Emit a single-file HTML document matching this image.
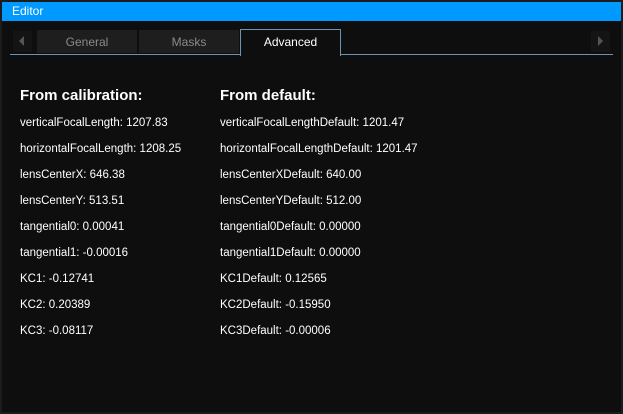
<!DOCTYPE html>
<html><head><style>
body{margin:0;width:623px;height:414px;background:#1c1c1c;font-family:"Liberation Sans",sans-serif;overflow:hidden}
.win{position:absolute;left:2px;top:2px;width:619px;height:410px;background:#0e0e0e}
.title{position:absolute;left:0;top:0;width:619px;height:19px;background:#0099ff;color:#fff;font-size:12px;line-height:19px;padding-left:10px;box-sizing:border-box}
.line{position:absolute;left:8px;top:52px;width:603px;height:1px;background:#6a94b4}
.tab{position:absolute;top:28px;height:23px;background:#1e1e1e;color:#8a8a8a;font-size:12px;line-height:25px;text-align:center}
.act{background:#0e0e0e;color:#fff;border:1px solid #6a94b4;border-bottom:none;top:27px;height:26px}
.arr{position:absolute;top:29px;width:19px;height:21px;background:#141414}
.t{position:absolute;color:#fff;font-size:11.5px;white-space:nowrap}
.h{position:absolute;color:#fff;font-size:15px;font-weight:bold}
</style></head><body><div class="win">
<div class="title">Editor</div>
<div class="arr" style="left:11px"><div style="position:absolute;left:6px;top:5px;border-right:5px solid #555;border-top:5px solid transparent;border-bottom:5px solid transparent"></div></div>
<div class="tab" style="left:35px;width:100px">General</div>
<div class="tab" style="left:137px;width:100px">Masks</div>
<div class="line"></div>
<div class="tab act" style="left:238px;width:99px">Advanced</div>
<div class="arr" style="left:589px"><div style="position:absolute;left:7px;top:5px;border-left:5px solid #555;border-top:5px solid transparent;border-bottom:5px solid transparent"></div></div>
<div class="h" style="left:18px;top:85px">From calibration:</div>
<div class="h" style="left:218px;top:85px">From default:</div>
<div class="t" style="left:18px;top:115px">verticalFocalLength: 1207.83</div>
<div class="t" style="left:18px;top:141px">horizontalFocalLength: 1208.25</div>
<div class="t" style="left:18px;top:167px">lensCenterX: 646.38</div>
<div class="t" style="left:18px;top:193px">lensCenterY: 513.51</div>
<div class="t" style="left:18px;top:219px">tangential0: 0.00041</div>
<div class="t" style="left:18px;top:245px">tangential1: -0.00016</div>
<div class="t" style="left:18px;top:271px">KC1: -0.12741</div>
<div class="t" style="left:18px;top:297px">KC2: 0.20389</div>
<div class="t" style="left:18px;top:323px">KC3: -0.08117</div>
<div class="t" style="left:218px;top:115px">verticalFocalLengthDefault: 1201.47</div>
<div class="t" style="left:218px;top:141px">horizontalFocalLengthDefault: 1201.47</div>
<div class="t" style="left:218px;top:167px">lensCenterXDefault: 640.00</div>
<div class="t" style="left:218px;top:193px">lensCenterYDefault: 512.00</div>
<div class="t" style="left:218px;top:219px">tangential0Default: 0.00000</div>
<div class="t" style="left:218px;top:245px">tangential1Default: 0.00000</div>
<div class="t" style="left:218px;top:271px">KC1Default: 0.12565</div>
<div class="t" style="left:218px;top:297px">KC2Default: -0.15950</div>
<div class="t" style="left:218px;top:323px">KC3Default: -0.00006</div>
</div></body></html>
